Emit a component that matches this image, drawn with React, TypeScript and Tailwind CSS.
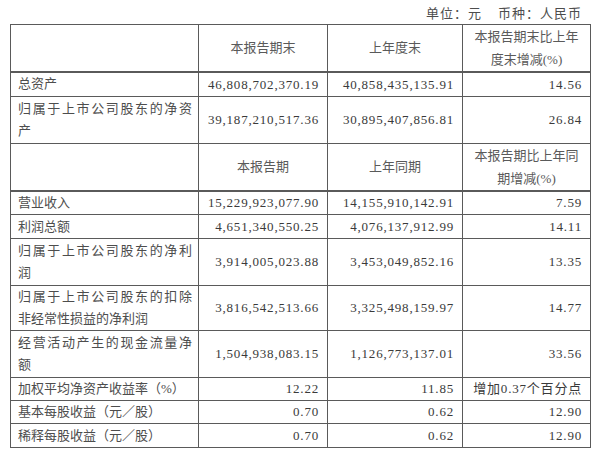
import React from "react";

type Row = {
  label: string[];
  justify?: boolean;
  a: string;
  b: string;
  c: string;
  h: number;
};

const topRows: Row[] = [
  { label: ["总资产"], a: "46,808,702,370.19", b: "40,858,435,135.91", c: "14.56", h: 24 },
  {
    label: ["归属于上市公司股东的净资", "产"],
    justify: true,
    a: "39,187,210,517.36",
    b: "30,895,407,856.81",
    c: "26.84",
    h: 47,
  },
];

const bottomRows: Row[] = [
  { label: ["营业收入"], a: "15,229,923,077.90", b: "14,155,910,142.91", c: "7.59", h: 24 },
  { label: ["利润总额"], a: "4,651,340,550.25", b: "4,076,137,912.99", c: "14.11", h: 24 },
  {
    label: ["归属于上市公司股东的净利", "润"],
    justify: true,
    a: "3,914,005,023.88",
    b: "3,453,049,852.16",
    c: "13.35",
    h: 47,
  },
  {
    label: ["归属于上市公司股东的扣除", "非经常性损益的净利润"],
    justify: true,
    a: "3,816,542,513.66",
    b: "3,325,498,159.97",
    c: "14.77",
    h: 45,
  },
  {
    label: ["经营活动产生的现金流量净", "额"],
    justify: true,
    a: "1,504,938,083.15",
    b: "1,126,773,137.01",
    c: "33.56",
    h: 47,
  },
  { label: ["加权平均净资产收益率（%）"], a: "12.22", b: "11.85", c: "增加0.37个百分点", h: 23 },
  { label: ["基本每股收益（元／股）"], a: "0.70", b: "0.62", c: "12.90", h: 23 },
  { label: ["稀释每股收益（元／股）"], a: "0.70", b: "0.62", c: "12.90", h: 24 },
];

const cell = "border border-[#5a5a5a] p-0 align-middle";
const num = "pr-[8px] text-right tracking-[0.8px] text-[#3a3a3a] font-['Liberation_Serif','Noto_Sans_CJK_SC',serif]";

function DataRow({ row }: { row: Row }) {
  return (
    <tr style={{ height: row.h }}>
      <td className={`${cell} pl-[7px] pr-[6px] leading-[22px] text-[#4d4d4d]`}>
        {row.label.map((line, i) => (
          <span
            key={i}
            className={
              row.justify && i === 0
                ? "block text-justify [text-align-last:justify]"
                : "block"
            }
          >
            {line}
          </span>
        ))}
      </td>
      <td className={`${cell} ${num}`}>{row.a}</td>
      <td className={`${cell} ${num}`}>{row.b}</td>
      <td className={`${cell} ${num}`}>{row.c}</td>
    </tr>
  );
}

function HeaderRow({ cols }: { cols: [string, string, string[]] }) {
  return (
    <tr className="h-[47px] border-b-2 border-[#5a5a5a]">
      <td className={cell}></td>
      <td className={`${cell} text-center text-[#5a5a5a]`}>{cols[0]}</td>
      <td className={`${cell} text-center text-[#5a5a5a]`}>{cols[1]}</td>
      <td className={`${cell} text-center leading-[23px] text-[#5a5a5a]`}>
        {cols[2].map((l) => (
          <span key={l} className="block">
            {l}
          </span>
        ))}
      </td>
    </tr>
  );
}

export default function App() {
  return (
    <div className="h-[453px] w-[600px] overflow-hidden bg-white font-['Liberation_Serif','Noto_Sans_CJK_SC',serif] text-[13px] text-[#3c3c3c]">
      <div className="flex h-[24px] items-center justify-end gap-[16px] pr-[18px] pt-[4px] tracking-[1px] text-[#4d4d4d]">
        <span>单位：元</span>
        <span>币种：人民币</span>
      </div>
      <table className="ml-[10px] w-[580px] table-fixed border-collapse">
        <colgroup>
          <col className="w-[188px]" />
          <col className="w-[129px]" />
          <col className="w-[135px]" />
          <col className="w-[128px]" />
        </colgroup>
        <tbody>
          <HeaderRow cols={["本报告期末", "上年度末", ["本报告期末比上年", "度末增减(%)"]]} />
          {topRows.map((r) => (
            <DataRow key={r.label.join("")} row={r} />
          ))}
          <HeaderRow cols={["本报告期", "上年同期", ["本报告期比上年同", "期增减(%)"]]} />
          {bottomRows.map((r) => (
            <DataRow key={r.label.join("")} row={r} />
          ))}
        </tbody>
      </table>
    </div>
  );
}
